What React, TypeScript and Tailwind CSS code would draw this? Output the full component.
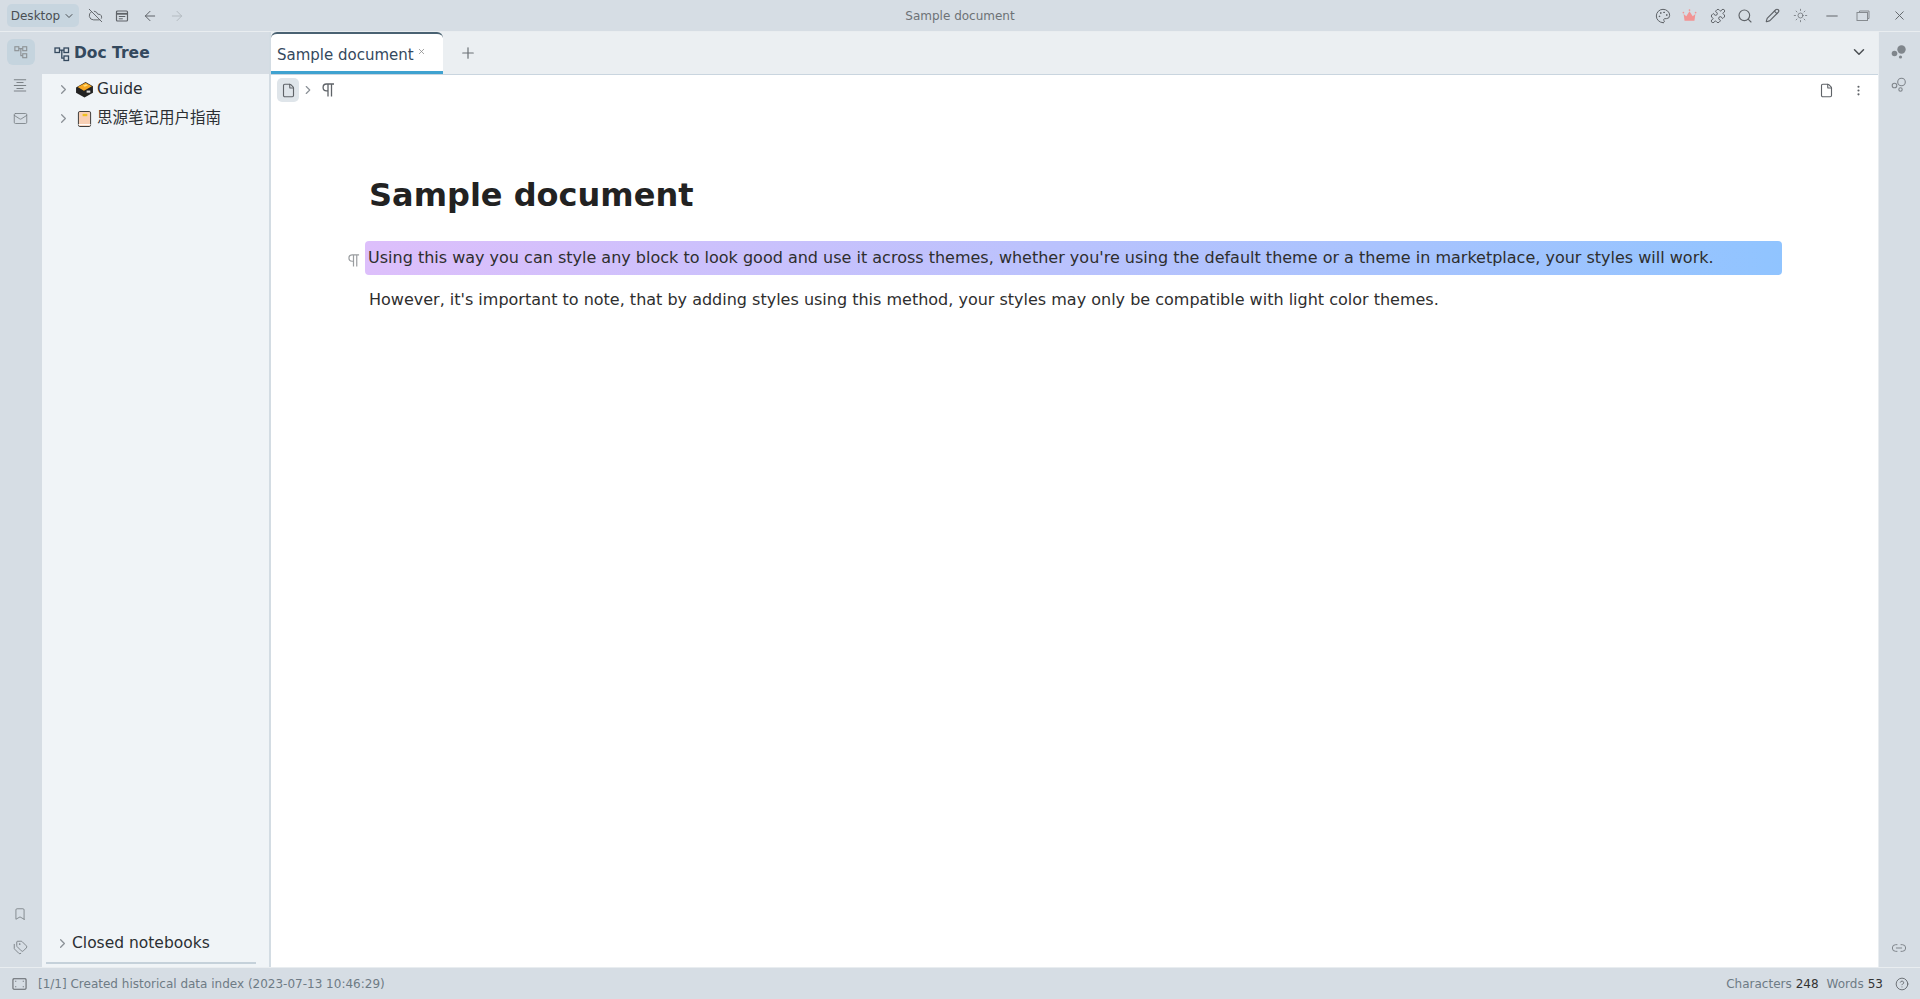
import {
  ArrowLeft,
  ArrowRight,
  Bookmark,
  ChevronDown,
  ChevronRight,
  CircleHelp,
  CloudOff,
  EllipsisVertical,
  File,
  Link2,
  Mail,
  Minus,
  Palette,
  Pencil,
  Plus,
  Puzzle,
  Search,
  Sun,
  Tags,
  X,
} from 'lucide-react';

const sans = 'font-["DejaVu_Sans","Noto_Sans_CJK_SC",sans-serif]';

function DocTreeIcon({ className }: { className?: string }) {
  return (
    <svg viewBox="0 0 16 16" className={className} fill="none" stroke="currentColor" strokeWidth="1.3">
      <rect x="1" y="2" width="4.5" height="4.5" />
      <rect x="10" y="2" width="4.5" height="4.5" />
      <rect x="10" y="10" width="4.5" height="4.5" />
      <path d="M5.5 4.2H10M7.8 4.2V12.2H10" />
    </svg>
  );
}

function OutlineIcon({ className }: { className?: string }) {
  return (
    <svg viewBox="0 0 16 16" className={className} fill="none" stroke="currentColor" strokeWidth="1.2">
      <path d="M1 2h14M4 5.5h8M1 9h14M4 12.5h8M1 15.5h14" transform="scale(1 .95)" />
    </svg>
  );
}

function PanelIcon({ className }: { className?: string }) {
  return (
    <svg viewBox="0 0 14 14" className={className} fill="none" stroke="currentColor">
      <rect x="1.5" y="2" width="11" height="10" rx="1" strokeWidth="1.2" />
      <path d="M1.5 4.8h11" strokeWidth="1.8" />
      <path d="M3.8 7.5h6.5M3.8 9.8h4" strokeWidth="1" />
    </svg>
  );
}

function ParagraphIcon({ className }: { className?: string }) {
  return (
    <svg viewBox="0 0 14 14" className={className} fill="none" stroke="currentColor" strokeWidth="1.300">
      <path d="M13 1H5.500a3.300 3.300 0 0 0 0 6.800H7M7 1v12.500M10.500 1v12.500" />
    </svg>
  );
}

function CrownIcon({ className }: { className?: string }) {
  return (
    <svg viewBox="0 0 14 14" className={className} fill="#f29494">
      <path d="M1.500 5.500 4 7.600 7 3l3 4.600 2.500-2.100-.9 6.500H2.400z" />
      <circle cx="1.300" cy="4.300" r=".8" />
      <circle cx="7" cy="1.900" r=".8" />
      <circle cx="12.700" cy="4.300" r=".8" />
    </svg>
  );
}

function RestoreIcon({ className }: { className?: string }) {
  return (
    <svg viewBox="0 0 14 14" className={className} fill="none" stroke="currentColor" strokeWidth="1">
      <rect x="1" y="3.500" width="10.500" height="8" />
      <path d="M3.500 3.500V2h9.500v7.500h-1.500" />
    </svg>
  );
}

function GuideIcon() {
  return (
    <svg viewBox="0 0 18 16" className="h-[17px] w-[19px]">
      <path d="M1 6 10 1l7 4v6l-8 4.500L1 11z" fill="#222" />
      <path d="M2.500 5.700 10 1.500l6 3.400-7.500 4.200z" fill="#f5a623" />
      <path d="M7.500 4.500 10.500 3l1.800 1-3 1.500z" fill="#ffe27a" />
      <rect x="11" y="9" width="3.500" height="2" fill="#ddd" />
    </svg>
  );
}

function BookIcon() {
  return (
    <svg viewBox="0 0 16 18" className="h-[18px] w-[15px]">
      <rect x="1.500" y="1" width="13" height="16" rx="1.500" fill="#f8cfb4" stroke="#333" strokeWidth="1" />
      <path d="M1.500 15h13" stroke="#fff" strokeWidth="1.200" />
      <rect x="6" y="3.500" width="5" height="2.500" fill="#f0c020" />
    </svg>
  );
}

function BubbleIcon({ filled }: { filled?: boolean }) {
  return filled ? (
    <svg viewBox="0 0 16 16" className="h-[16px] w-[16px]" fill="#80868c">
      <circle cx="10.500" cy="5.500" r="4.200" />
      <circle cx="3.500" cy="9.500" r="2.800" />
      <circle cx="9.500" cy="13" r="1.600" />
    </svg>
  ) : (
    <svg viewBox="0 0 16 16" className="h-[16px] w-[16px]" fill="none" stroke="#80868c" strokeWidth="1.100">
      <circle cx="10.500" cy="5" r="3.800" />
      <circle cx="3.500" cy="8.500" r="2.300" />
      <circle cx="9.500" cy="12.500" r="1.700" />
    </svg>
  );
}

function TreeRow({ icon, label }: { icon: React.ReactNode; label: string }) {
  return (
    <div className="flex h-[29px] items-center">
      <ChevronRight className="ml-[13.5px] h-[15px] w-[15px] text-[#8b9197]" strokeWidth={2} />
      <span className="ml-[3.5px] flex w-[20px] justify-center">{icon}</span>
      <span className="ml-[3px] text-[15.5px] text-[#2b2f33]">{label}</span>
    </div>
  );
}

export default function App() {
  return (
    <div className={`flex h-screen w-full flex-col overflow-hidden bg-[#d6dde4] ${sans}`}>
      {/* Title bar */}
      <header className="relative flex h-[32px] shrink-0 items-center border-b border-[#e9edf0] pl-[7px] text-[#5f6368]">
        <div className="flex h-[23px] w-[72px] items-center justify-center gap-[3px] rounded-[5px] bg-[#c7d5df] text-[12px] text-[#4a4f53]">
          Desktop
          <ChevronDown className="h-[12px] w-[12px]" />
        </div>
        <CloudOff className="ml-[9px] h-[15px] w-[15px]" strokeWidth={1.5} />
        <PanelIcon className="ml-[12px] h-[14px] w-[14px]" />
        <ArrowLeft className="ml-[13px] h-[16px] w-[16px]" strokeWidth={1.5} />
        <ArrowRight className="ml-[11px] h-[16px] w-[16px] text-[#b4bbc1]" strokeWidth={1.5} />
        <span className="absolute left-1/2 top-[9px] -translate-x-1/2 text-[12px] leading-[15px] text-[#6d7276]">
          Sample document
        </span>
        <div className="ml-auto flex items-center pr-[13px]">
          <Palette className="h-[16px] w-[16px]" strokeWidth={1.5} />
          <CrownIcon className="ml-[11.5px] h-[15px] w-[15px]" />
          <Puzzle className="ml-[12.5px] h-[16px] w-[16px]" strokeWidth={1.5} />
          <Search className="ml-[11px] h-[16px] w-[16px]" strokeWidth={1.7} />
          <Pencil className="ml-[12.5px] h-[15px] w-[15px]" strokeWidth={1.8} />
          <Sun className="ml-[13px] h-[15px] w-[15px]" strokeWidth={1.1} />
          <Minus className="ml-[14.5px] h-[18px] w-[18px]" strokeWidth={1.3} />
          <RestoreIcon className="ml-[15px] h-[14px] w-[14px] text-[#868b90]" />
          <X className="ml-[22.5px] h-[15px] w-[15px]" strokeWidth={1.5} />
        </div>
      </header>

      {/* Main */}
      <div className="flex min-h-0 flex-1">
        {/* Left dock */}
        <aside className="flex w-[42px] shrink-0 flex-col items-center text-[#7c8287]">
          <div className="mt-[7px] flex h-[26px] w-[28px] items-center justify-center rounded-[6px] bg-[#c5d4de] text-[#8e9396]">
            <DocTreeIcon className="h-[14px] w-[14px]" />
          </div>
          <OutlineIcon className="mr-[2px] mt-[13px] h-[14px] w-[14px]" />
          <Mail className="mr-[2px] mt-[19px] h-[15px] w-[15px]" strokeWidth={1.4} />
          <Bookmark className="mr-[2px] mt-auto h-[14px] w-[14px]" strokeWidth={1.5} />
          <Tags className="mb-[12px] mr-[2px] mt-[19px] h-[15px] w-[15px]" strokeWidth={1.5} />
        </aside>

        {/* Doc tree panel */}
        <section className="flex w-[227px] shrink-0 flex-col bg-[#f0f4f7]">
          <div className="flex h-[42px] shrink-0 items-center bg-[#d6dde4] pl-[12px] pt-[1px] text-[#34495e]">
            <DocTreeIcon className="h-[16px] w-[16px]" />
            <span className="ml-[4px] text-[15.5px] font-bold">Doc Tree</span>
          </div>
          <div className="pt-[1px]">
            <TreeRow icon={<GuideIcon />} label="Guide" />
            <TreeRow icon={<BookIcon />} label="思源笔记用户指南" />
          </div>
          <div className="mt-auto flex h-[29px] items-center text-[15.5px] text-[#2b2f33]">
            <ChevronRight className="ml-[13px] h-[15px] w-[15px] text-[#8b9197]" strokeWidth={2} />
            <span className="ml-[2px]">Closed notebooks</span>
          </div>
          <div className="mx-[4px] mb-[3px] mt-[4px] h-[2px] w-[210px] bg-[#c5d1da]" />
        </section>
        <div className="w-[2px] shrink-0 bg-[#d3dce3]" />

        {/* Editor */}
        <main className="flex min-w-0 flex-1 flex-col bg-white">
          <div className="flex h-[43px] shrink-0 items-stretch border-b border-[#c9d5df] bg-[#ebeff2]">
            <div className="flex w-[172px] items-center rounded-t-[6px] border-b-[3px] border-t-[2px] border-b-[#3fa2d0] border-t-[#4a6272] bg-white pl-[6px]">
              <span className="mt-[5px] text-[15px] leading-[18px] text-[#34495e]">Sample document</span>
              <X className="-mt-[2px] ml-[3px] h-[9px] w-[9px] text-[#888]" strokeWidth={2} />
            </div>
            <Plus className="ml-[16px] mt-[12px] h-[18px] w-[18px] text-[#6a7075]" strokeWidth={1.6} />
            <ChevronDown className="ml-auto mr-[10px] mt-[11px] h-[18px] w-[18px] text-[#4b4f53]" strokeWidth={2} />
          </div>

          <div className="flex h-[30px] shrink-0 items-center pl-[6px] pr-[13.5px] text-[#5f6368]">
            <div className="flex h-[24px] w-[22px] items-center justify-center rounded-[5px] bg-[#dfe5ea]">
              <File className="h-[15px] w-[15px]" strokeWidth={1.8} />
            </div>
            <ChevronRight className="ml-[2px] h-[14px] w-[14px] text-[#8b9197]" strokeWidth={2} />
            <ParagraphIcon className="ml-[6px] h-[14px] w-[14px]" />
            <File className="ml-auto h-[15px] w-[15px]" strokeWidth={1.8} />
            <EllipsisVertical className="ml-[18px] h-[13px] w-[13px]" strokeWidth={2} />
          </div>

          <div className="relative pl-[98px] pt-[63px]">
            <h1 className="text-[32px] font-bold leading-[54px] text-[#222]">Sample document</h1>
            <ParagraphIcon className="absolute left-[75.5px] top-[149px] h-[13px] w-[13px] text-[#9a9da0]" />
            <div className="-ml-[4px] mt-[19px] flex h-[34px] w-[1417px] items-center rounded-[4px] bg-gradient-to-r from-[#ddbffb] to-[#90c4ff] pl-[3px]">
              <p className="text-[16px] text-[#2e2e2e]">
                Using this way you can style any block to look good and use it across themes, whether you're using the default theme or a theme in marketplace, your styles will work.
              </p>
            </div>
            <p className="mt-[13px] text-[16px] leading-[24px] text-[#2e2e2e]">
              However, it's important to note, that by adding styles using this method, your styles may only be compatible with light color themes.
            </p>
          </div>
        </main>

        {/* Right dock */}
        <aside className="flex w-[42px] shrink-0 flex-col items-center border-l border-[#e9edf0] pt-[12px] pr-[1px] text-[#80868c]">
          <BubbleIcon filled />
          <div className="mt-[17px]">
            <BubbleIcon />
          </div>
          <Link2 className="mb-[11px] mt-auto h-[16px] w-[16px]" strokeWidth={1.5} />
        </aside>
      </div>

      {/* Status bar */}
      <footer className="flex h-[32px] shrink-0 items-center border-t border-[#e9edf0] pl-[12px] pr-[11px] text-[12px] text-[#6e7b85]">
        <svg viewBox="0 0 16 14" className="h-[14px] w-[15px]" fill="none" stroke="#5f6368" strokeWidth="1.100">
          <rect x="1" y="1.500" width="14" height="11" rx="1" />
          <path d="M3.500 4h1M11.500 4h1M3.500 10h1M11.500 10h1" />
        </svg>
        <span className="ml-[11px]">[1/1] Created historical data index (2023-07-13 10:46:29)</span>
        <span className="ml-auto">Characters</span>
        <span className="ml-[4px] text-[#333]">248</span>
        <span className="ml-[8px]">Words</span>
        <span className="ml-[4px] text-[#333]">53</span>
        <CircleHelp className="ml-[12px] h-[14px] w-[14px] text-[#5f6368]" strokeWidth={1.5} />
      </footer>
    </div>
  );
}
